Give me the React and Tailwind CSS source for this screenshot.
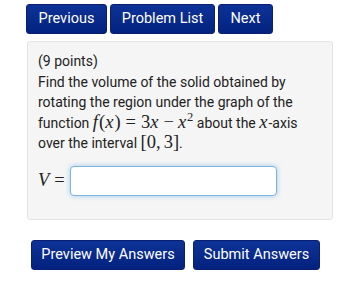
import React from 'react'

const btn =
  'h-[30px] whitespace-nowrap rounded-[3px] border border-[#0b1f6e] bg-gradient-to-b from-[#0d3297] to-[#04227f] px-0 text-center text-[14.5px] text-white leading-none'

function M({ children }) {
  return <span className="font-['Liberation_Serif',serif] text-[18.5px] leading-none">{children}</span>
}

function I({ children }) {
  return <i className="mr-[1px]">{children}</i>
}

function Op({ children, w = 'mx-[4px]' }) {
  return <span className={w}>{children}</span>
}

export default function App() {
  return (
    <div className="h-[288px] w-[360px] bg-white font-['Roboto',sans-serif] text-[#222]">
      <div className="flex gap-[3px] pl-[26px] pt-[4px]">
        <button className={btn + ' w-[81px]'}>Previous</button>
        <button className={btn + ' w-[105px]'}>Problem List</button>
        <button className={btn + ' w-[55px]'}>Next</button>
      </div>

      <div className="mx-[27px] mt-[7px] h-[179px] w-[306px] rounded-[3px] border border-[#e3e3e3] bg-[#f5f5f5] px-[10px] pt-[9px]">
        <div className="text-[14px] leading-[20.5px]">
          <div className="h-[20.5px]">(9 points)</div>
          <div className="h-[20.5px]">Find the volume of the solid obtained by</div>
          <div className="h-[20.5px]">rotating the region under the graph of the</div>
          <div className="h-[20.5px] whitespace-nowrap">
            function{' '}
            <M>
              <I>f</I>(<I>x</I>)<Op w="mx-[5px]">=</Op>3<I>x</I>
              <Op>−</Op>
              <I>x</I>
              <span className="relative top-[-7px] text-[12.5px]">2</span>
            </M>{' '}
            about the <M><I>x</I></M>-axis
          </div>
          <div className="h-[20.5px]">
            over the interval <M>[0,<span className="ml-[3px]">3</span>]</M>.
          </div>
        </div>
        <div className="mt-[12px] flex items-center gap-[5px]">
          <M>
            <I>V</I>
            <Op w="ml-[4px]">=</Op>
          </M>
          <input className="h-[30px] w-[207px] rounded-[4px] border border-[#7fb3e0] bg-white shadow-[0_0_5px_rgba(102,175,233,0.6)] outline-none" />
        </div>
      </div>

      <div className="mt-[20px] flex gap-[8px] pl-[31px]">
        <button className={btn + ' w-[154px]'}>Preview My Answers</button>
        <button className={btn + ' w-[127px]'}>Submit Answers</button>
      </div>
    </div>
  )
}
